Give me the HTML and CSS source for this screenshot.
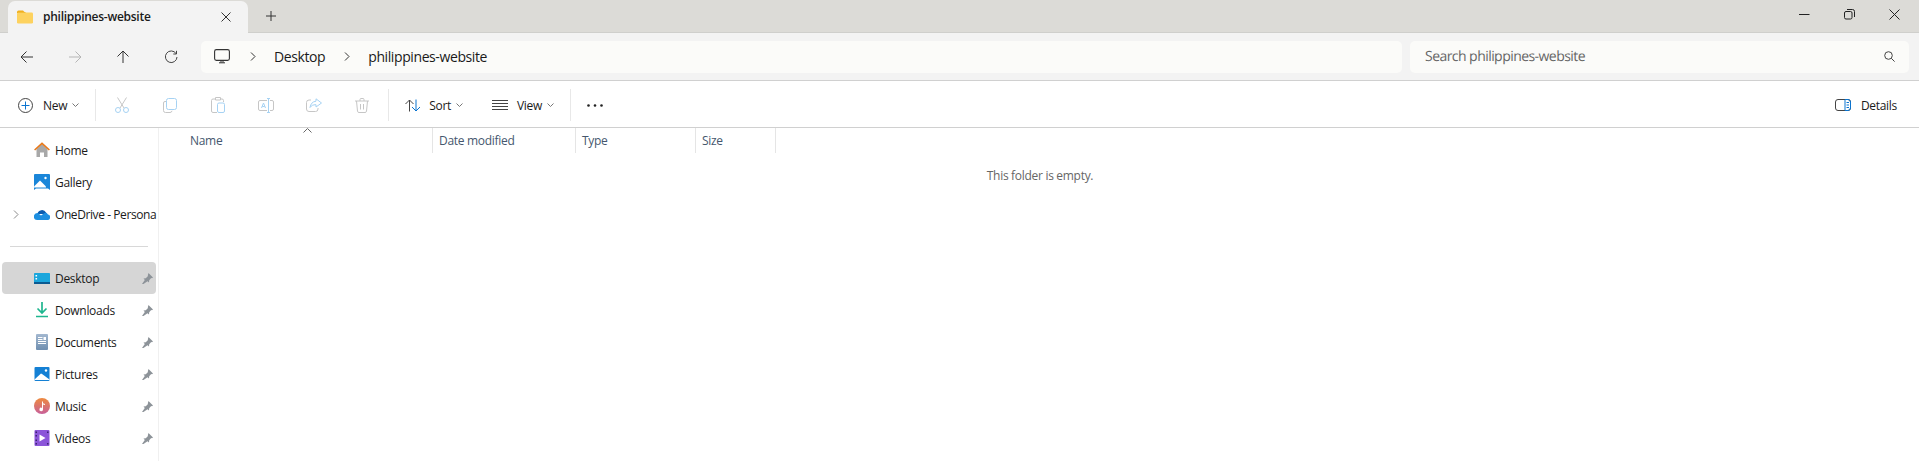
FILE: index.html
```html
<!DOCTYPE html>
<html lang="en">
<head>
<meta charset="utf-8">
<title>philippines-website - File Explorer</title>
<link rel="stylesheet" href="styles.css">
</head>
<body>
<div class="window">
  <header class="titlebar">
    <div class="tab">
      <svg class="tab-folder" width="16" height="14" viewBox="0 0 16 14"><path fill="#f2b01e" d="M0 2a1.500 1.500 0 0 1 1.500-1.500H6L8 2.500H0z"/><path fill="#e8a80f" d="M0 2h8l1 1H0z"/><rect y="2.500" width="16" height="11" rx="1.200" fill="#fdd25f"/></svg>
      <span class="tab-title">philippines-website</span>
      <svg class="tab-close" width="10" height="10" viewBox="0 0 10 10"><path d="M.5.5l9 9M9.500.5l-9 9" stroke="#333" fill="none"/></svg>
    </div>
    <svg class="tab-add" width="10" height="10" viewBox="0 0 10 10"><path d="M5 0v10M0 5h10" stroke="#333" fill="none"/></svg>
    <div class="winctl">
      <span class="winbtn"><svg width="11" height="11" viewBox="0 0 11 11"><path d="M0 5.500h10.500" stroke="#222" fill="none"/></svg></span>
      <span class="winbtn"><svg width="11" height="11" viewBox="0 0 11 11"><rect x=".5" y="2.500" width="7.500" height="7.500" rx="1.500" stroke="#222" fill="none"/><path d="M3 .5h5.500a2 2 0 0 1 2 2V8" stroke="#222" fill="none"/></svg></span>
      <span class="winbtn"><svg width="11" height="11" viewBox="0 0 11 11"><path d="M.5.5l10 10M10.500.5l-10 10" stroke="#222" fill="none"/></svg></span>
    </div>
  </header>

  <nav class="navbar">
    <div class="navbtns">
      <svg width="14" height="14" viewBox="0 0 14 14"><path d="M13 7H1M6.500 1.500L1 7l5.500 5.500" stroke="#333" fill="none"/></svg>
      <svg width="14" height="14" viewBox="0 0 14 14"><path d="M1 7h12M7.500 1.500L13 7l-5.500 5.500" stroke="#b5b5b5" fill="none"/></svg>
      <svg width="14" height="14" viewBox="0 0 14 14"><path d="M7 13V1M1.500 6.500L7 1l5.500 5.500" stroke="#333" fill="none"/></svg>
      <svg width="14" height="14" viewBox="0 0 14 14"><path d="M12 3.500A5.800 5.800 0 1 0 13 7M12.500 .8v3.200H9.300" stroke="#444" fill="none"/></svg>
    </div>
    <div class="address">
      <svg class="addr-pc" width="16" height="15" viewBox="0 0 16 15"><rect x=".6" y=".6" width="14.800" height="10.800" rx="1.800" stroke="#333" stroke-width="1.100" fill="none"/><path d="M5 13.800h6M7 12v1.500M9 12v1.500" stroke="#333" fill="none"/></svg>
      <svg class="chev" width="6" height="9" viewBox="0 0 6 9"><path d="M1 .5l4 4-4 4" stroke="#333" fill="none"/></svg>
      <span class="crumb">Desktop</span>
      <svg class="chev" width="6" height="9" viewBox="0 0 6 9"><path d="M1 .5l4 4-4 4" stroke="#333" fill="none"/></svg>
      <span class="crumb">philippines-website</span>
    </div>
    <div class="search">
      <span class="search-text">Search philippines-website</span>
      <svg width="11" height="11" viewBox="0 0 11 11"><circle cx="4.500" cy="4.500" r="3.800" stroke="#444" fill="none"/><path d="M7.300 7.300l3.300 3.300" stroke="#444" fill="none"/></svg>
    </div>
  </nav>

  <div class="commandbar">
    <div class="cmd cmd-new">
      <svg width="15" height="15" viewBox="0 0 15 15"><circle cx="7.500" cy="7.500" r="7" stroke="#444" fill="none"/><path d="M7.500 3.500v8M3.500 7.500h8" stroke="#0a74d0" fill="none"/></svg>
      <span class="cmd-label">New</span>
      <svg class="caret" width="7" height="4" viewBox="0 0 7 4"><path d="M.5.5l3 3 3-3" stroke="#777" fill="none"/></svg>
    </div>
    <span class="vsep sep-new"></span>
    <div class="cmd-icons">
      <svg width="14" height="16" viewBox="0 0 14 16"><path d="M2.500.5L9 11M11.500.5L5 11" stroke="#c6c6c6" fill="none"/><circle cx="3" cy="13" r="2.500" stroke="#a6d2f3" fill="none"/><circle cx="11" cy="13" r="2.500" stroke="#a6d2f3" fill="none"/></svg>
      <svg width="14" height="15" viewBox="0 0 14 15"><path d="M3 3.500H2A1.500 1.500 0 0 0 .5 5v7.500A2 2 0 0 0 2.500 14.500H7A2 2 0 0 0 9 12.800" stroke="#c6c6c6" fill="none"/><rect x="3.500" y=".5" width="10" height="11" rx="2" stroke="#a6d2f3" fill="none"/></svg>
      <svg width="14" height="16" viewBox="0 0 14 16"><path d="M4 2H2A1.500 1.500 0 0 0 .5 3.500V14A1.500 1.500 0 0 0 2 15.500h4M10 2h1a1.500 1.500 0 0 1 1.500 1.500V5M4.500.5h5v2.500h-5z" stroke="#c6c6c6" fill="none"/><rect x="6.500" y="6" width="7" height="9.500" rx="1.500" stroke="#a6d2f3" fill="none"/></svg>
      <svg width="16" height="15" viewBox="0 0 16 15"><path d="M9 2.500H2A1.500 1.500 0 0 0 .5 4v7A1.500 1.500 0 0 0 2 12.500h7M12 2.500h2A1.500 1.500 0 0 1 15.500 4v7a1.500 1.500 0 0 1-1.500 1.500h-2" stroke="#c6c6c6" fill="none"/><path d="M10.500.5v14M9 .5h3M9 14.500h3M3.500 10L5.500 5l2 5M4.300 8.500h2.400" stroke="#a6d2f3" fill="none"/></svg>
      <svg width="16" height="14" viewBox="0 0 16 14"><path d="M5 2H3A2.500 2.500 0 0 0 .5 4.500v6.500A2.500 2.500 0 0 0 3 13.500h6.500A2.500 2.500 0 0 0 12 11v-1" stroke="#c6c6c6" fill="none"/><path d="M10 .8l5.500 4.200L10 9V6.700C7 6.700 5.500 7.500 4 9.500 4.500 6 6.500 3.500 10 3.200z" stroke="#a6d2f3" fill="none"/></svg>
      <svg width="14" height="15" viewBox="0 0 14 15"><path d="M0 3h14M5 3V1.500A1 1 0 0 1 6 .5h2a1 1 0 0 1 1 1V3M1.500 3l1 10.200A1.500 1.500 0 0 0 4 14.500h6a1.500 1.500 0 0 0 1.500-1.300L12.500 3M5.500 6v5.500M8.500 6v5.500" stroke="#c6c6c6" fill="none"/></svg>
    </div>
    <span class="vsep sep-icons"></span>
    <div class="cmd cmd-sort">
      <svg width="16" height="13" viewBox="0 0 16 13"><path d="M4.500 12.500V1M.5 5L4.500 1l4 4" stroke="#444" fill="none"/><path d="M11 .5V12M7 8l4 4 4-4" stroke="#0a74d0" fill="none"/></svg>
      <span class="cmd-label label-sort">Sort</span>
      <svg class="caret" width="7" height="4" viewBox="0 0 7 4"><path d="M.5.5l3 3 3-3" stroke="#777" fill="none"/></svg>
    </div>
    <div class="cmd cmd-view">
      <svg width="16" height="10" viewBox="0 0 16 10"><path d="M0 .5h16M0 3.500h16M0 6.500h16M0 9.500h16" stroke="#444" fill="none"/></svg>
      <span class="cmd-label label-view">View</span>
      <svg class="caret" width="7" height="4" viewBox="0 0 7 4"><path d="M.5.5l3 3 3-3" stroke="#777" fill="none"/></svg>
    </div>
    <span class="vsep sep-view"></span>
    <svg class="more" width="16" height="3" viewBox="0 0 16 3"><circle cx="1.500" cy="1.500" r="1.300" fill="#222"/><circle cx="8" cy="1.500" r="1.300" fill="#222"/><circle cx="14.500" cy="1.500" r="1.300" fill="#222"/></svg>
    <div class="cmd cmd-details">
      <svg width="16" height="12" viewBox="0 0 16 12"><rect x=".5" y=".5" width="15" height="11" rx="2.500" stroke="#444" fill="none"/><path d="M10 .5h3A2.500 2.500 0 0 1 15.500 3v6a2.500 2.500 0 0 1-2.500 2.500h-3zM11.500 3.500h2.500M11.500 6h2.500M11.500 8.500h2.500" stroke="#0a74d0" fill="none"/></svg>
      <span class="cmd-label">Details</span>
    </div>
  </div>

  <div class="body">
    <aside class="sidebar">
      <div class="side-item">
        <svg class="side-icon" width="16" height="16" viewBox="0 0 16 16"><path fill="#a8a8a8" d="M2.500 7L8 2l5.500 5v8h-3.500v-4.500H6V15H2.500z"/><path fill="none" stroke="#e8791a" stroke-width="1.600" d="M.6 8L8 1.300 15.400 8"/></svg>
        <span>Home</span>
      </div>
      <div class="side-item">
        <svg class="side-icon" width="16" height="16" viewBox="0 0 16 16"><path fill="#1a86d9" d="M1 0h14a1 1 0 0 1 1 1v15l-2-1.500H2L0 16V1a1 1 0 0 1 1-1z"/><path fill="#fff" d="M0 12.500L6 6.500l6 6v1H0z"/><circle cx="11.500" cy="4" r="1.200" fill="#fff"/></svg>
        <span>Gallery</span>
      </div>
      <div class="side-item">
        <svg class="expander" width="6" height="9" viewBox="0 0 6 9"><path d="M1 .5l4 4-4 4" stroke="#8a8a8a" fill="none"/></svg>
        <svg class="side-icon" width="16" height="11" viewBox="0 0 16 11"><path fill="#0b5cb0" d="M3.500 5A4.500 4.500 0 0 1 12 3.600 3.500 3.500 0 0 1 13 5H4z"/><path fill="#1d8fe0" d="M3.800 4a3 3 0 0 0-.8 7h10a2.800 2.800 0 0 0 1-5.500A3 3 0 0 0 9.800 4.500L7 6.500z"/></svg>
        <span class="side-long">OneDrive - Persona</span>
      </div>
      <div class="side-sep"></div>
      <div class="side-item pinned active">
        <svg class="side-icon" width="16" height="11" viewBox="0 0 16 11"><rect width="16" height="10" rx=".8" fill="#1ba6dc"/><rect width="16" height="2" y="9" fill="#0b5a91"/><path fill="#fff" d="M1.500 2h1.600v1.600H1.500zM1.500 5h1.600v1.600H1.500z"/></svg>
        <span>Desktop</span>
        <svg class="pin" width="11" height="11" viewBox="0 0 11 11"><path fill="#8d9399" d="M6.500 0L11 4.500l-1 .7-.8-.2L7.200 7.200 7 9.500 5.500 8.200 1.500 11 0 11l2.800-4L1.500 5.500l2.300-.2L6 3l-.2-.8z"/></svg>
      </div>
      <div class="side-item pinned">
        <svg class="side-icon" width="16" height="16" viewBox="0 0 16 16"><path d="M8 0v10M3.500 6.500L8 11l4.500-4.500" stroke="#1fb68f" stroke-width="1.700" fill="none"/><path d="M2 14.500h12" stroke="#1fb68f" stroke-width="1.500"/></svg>
        <span>Downloads</span>
        <svg class="pin" width="11" height="11" viewBox="0 0 11 11"><path fill="#8d9399" d="M6.500 0L11 4.500l-1 .7-.8-.2L7.200 7.200 7 9.500 5.500 8.200 1.500 11 0 11l2.800-4L1.500 5.500l2.300-.2L6 3l-.2-.8z"/></svg>
      </div>
      <div class="side-item pinned">
        <svg class="side-icon" width="16" height="16" viewBox="0 0 16 16"><defs><linearGradient id="doc" x1="0" y1="0" x2="0" y2="1"><stop offset="0" stop-color="#a3b8d0"/><stop offset="1" stop-color="#6f8fb0"/></linearGradient></defs><rect x="2" width="12" height="16" rx="1" fill="url(#doc)"/><path d="M4 3.500h4.500M4 5.500h4.500M4 7.500h8M4 9.500h8" stroke="#fff"/><rect x="9.500" y="3" width="2.500" height="3" fill="#fff"/></svg>
        <span>Documents</span>
        <svg class="pin" width="11" height="11" viewBox="0 0 11 11"><path fill="#8d9399" d="M6.500 0L11 4.500l-1 .7-.8-.2L7.200 7.200 7 9.500 5.500 8.200 1.500 11 0 11l2.800-4L1.500 5.500l2.300-.2L6 3l-.2-.8z"/></svg>
      </div>
      <div class="side-item pinned">
        <svg class="side-icon" width="16" height="14" viewBox="0 0 16 14"><rect x=".5" width="15" height="14" rx="1" fill="#1480d4"/><path fill="#fff" d="M.5 12.500L7 6.500l1 .6 7.500 5.400v.5H.5z"/><circle cx="12" cy="3.500" r="1.200" fill="#fff"/></svg>
        <span>Pictures</span>
        <svg class="pin" width="11" height="11" viewBox="0 0 11 11"><path fill="#8d9399" d="M6.500 0L11 4.500l-1 .7-.8-.2L7.200 7.200 7 9.500 5.500 8.200 1.500 11 0 11l2.800-4L1.500 5.500l2.300-.2L6 3l-.2-.8z"/></svg>
      </div>
      <div class="side-item pinned">
        <svg class="side-icon" width="16" height="16" viewBox="0 0 16 16"><defs><linearGradient id="mus" x1="0" y1="0" x2="0" y2="1"><stop offset="0" stop-color="#ee8a3e"/><stop offset="1" stop-color="#c8609a"/></linearGradient></defs><circle cx="8" cy="8" r="8" fill="url(#mus)"/><path fill="#fff" d="M8 3.500h1v1.800l2 .8v1L9 6.500v5a1.800 1.800 0 1 1-1-1.600z"/></svg>
        <span>Music</span>
        <svg class="pin" width="11" height="11" viewBox="0 0 11 11"><path fill="#8d9399" d="M6.500 0L11 4.500l-1 .7-.8-.2L7.200 7.200 7 9.500 5.500 8.200 1.500 11 0 11l2.800-4L1.500 5.500l2.300-.2L6 3l-.2-.8z"/></svg>
      </div>
      <div class="side-item pinned">
        <svg class="side-icon" width="16" height="16" viewBox="0 0 16 16"><rect x=".5" width="15" height="16" rx="1" fill="#8b55d9"/><path fill="#fff" d="M5.500 4.500L11.500 8l-6 3.500z"/><path fill="#3b2370" d="M1.500 1.500h1.500v1.500H1.500zM1.500 5h1.500v1.500H1.500zM1.500 9.500h1.500V11H1.500zM1.500 13h1.500v1.500H1.500zM13 1.500h1.500v1.500H13zM13 13h1.500v1.500H13z"/></svg>
        <span>Videos</span>
        <svg class="pin" width="11" height="11" viewBox="0 0 11 11"><path fill="#8d9399" d="M6.500 0L11 4.500l-1 .7-.8-.2L7.200 7.200 7 9.500 5.500 8.200 1.500 11 0 11l2.800-4L1.500 5.500l2.300-.2L6 3l-.2-.8z"/></svg>
      </div>
    </aside>
    <main class="content">
      <svg class="sort-arrow" width="9" height="5" viewBox="0 0 9 5"><path d="M.5 4.500l4-4 4 4" stroke="#666" fill="none"/></svg>
      <div class="columns">
        <div class="col col-name">Name</div>
        <div class="col col-date">Date modified</div>
        <div class="col col-type">Type</div>
        <div class="col col-size">Size</div>
      </div>
      <p class="empty">This folder is empty.</p>
    </main>
  </div>
</div>
</body>
</html>
```
FILE: styles.css
```css
* { box-sizing: border-box; }
html, body { margin: 0; padding: 0; height: 100%; overflow: hidden; background: #fff; }
body { font-family: "Open Sans", "Noto Sans", sans-serif; font-size: 12px; color: #1a1a1a; }
svg { display: block; flex: none; }
.window { width: 1919px; height: 461px; display: flex; flex-direction: column; }

.titlebar { height: 33px; background: #dcdbd7; border-bottom: 1px solid #cfcfcc; display: flex; align-items: center; padding-left: 8px; flex: none; }
.tab { width: 240px; height: 32px; margin-top: 1px; background: #f3f3f3; border-radius: 7px 7px 0 0; display: flex; align-items: center; padding: 0 17px 0 9px; position: relative; z-index: 1; }
.tab-title { margin-left: 10px; font-size: 12px; font-weight: 600; letter-spacing: -.27px; flex: 1; }
.tab-add { margin-left: 18px; }
.winctl { margin-left: auto; display: flex; padding-right: 19px; margin-top: -4px; gap: 34px; }
.winbtn { width: 11px; height: 11px; display: block; }

.navbar { height: 48px; background: #f3f3f3; border-bottom: 1px solid #d0d0d0; display: flex; align-items: center; padding-left: 20px; flex: none; }
.navbtns { display: flex; gap: 34px; width: 181px; }
.address { width: 1201px; height: 32px; background: #fbfbf9; border-radius: 5px; display: flex; align-items: center; padding-left: 13px; }
.addr-pc { margin-right: 20px; }
.chev { margin-right: 18px; }
.crumb { font-size: 14px; letter-spacing: -.4px; margin-right: 19px; }
.search { width: 499px; height: 32px; margin-left: 8px; background: #fbfbf9; border-radius: 5px; display: flex; align-items: center; justify-content: space-between; padding: 0 14px 0 15px; color: #666; font-size: 14px; letter-spacing: -.55px; text-rendering: geometricPrecision; }

.commandbar { height: 47px; background: #fff; border-bottom: 1px solid #d0d0d0; display: flex; align-items: center; padding: 2px 0 0 18px; flex: none; }
.cmd { display: flex; align-items: center; }
.cmd-label { font-size: 12px; letter-spacing: -.3px; margin-left: 10px; }
.label-sort { margin-left: 8px; }
.label-view { margin-left: 9px; }
.caret { margin-left: 5px; }
.vsep { width: 1px; height: 32px; background: #e8e8e8; display: block; flex: none; }
.sep-new { margin-left: 16px; }
.cmd-icons { display: flex; align-items: center; gap: 32px; margin-left: 18px; }
.cmd-icons svg { width: 16px; }
.sep-icons { margin-left: 18px; }
.cmd-sort { margin-left: 16px; }
.cmd-view { margin-left: 29px; }
.sep-view { margin-left: 16px; }
.more { margin-left: 16px; }
.cmd-details { margin-left: auto; padding-right: 22px; }

.body { flex: 1; display: flex; min-height: 0; }
.sidebar { width: 159px; border-right: 1px solid #f0f0f0; padding: 6px 0 0 2px; flex: none; }
.side-item { position: relative; width: 154px; height: 32px; display: flex; align-items: center; border-radius: 4px; padding-left: 32px; }
.side-item > span { margin-left: 5px; font-size: 12px; letter-spacing: -.3px; white-space: nowrap; }
.side-item > .side-long { letter-spacing: -.42px; }
.side-icon { width: 16px; }
.expander { position: absolute; left: 11px; top: 12px; }
.side-sep { width: 138px; height: 1px; background: #d8d8d8; margin: 16px 0 15px 8px; }
.active { background: #d6d6d6; }
.pin { position: absolute; right: 3px; top: 11px; }

.content { flex: 1; position: relative; }
.sort-arrow { position: absolute; left: 144px; top: 0; }
.columns { display: flex; height: 25px; font-size: 12px; letter-spacing: -.3px; color: #45576e; }
.col { display: flex; align-items: center; padding-left: 6px; border-right: 1px solid #e5e5e5; }
.col-name { width: 274px; padding-left: 31px; }
.col-date { width: 143px; }
.col-type { width: 120px; }
.col-size { width: 80px; }
.empty { margin: 0; width: 1762px; text-align: center; font-size: 12px; letter-spacing: -.3px; color: #666; position: absolute; left: 0; top: 39px; }
```
